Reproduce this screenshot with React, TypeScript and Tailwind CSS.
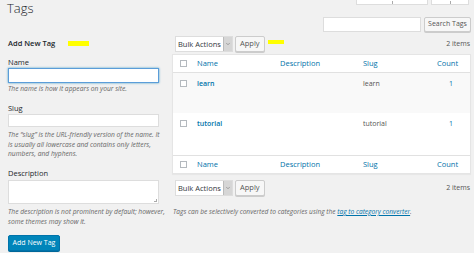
import { ChevronDown } from "lucide-react";

const rows = [
  { name: "learn", slug: "learn", count: "1", bg: "bg-[#f9f9f9]", h: "h-[40px]" },
  { name: "tutorial", slug: "tutorial", count: "1", bg: "bg-white", h: "h-[42px]" },
];

const Checkbox = () => (
  <span className="block w-[7px] h-[7px] border border-[#b4b9be] bg-white" />
);

const BulkBar = ({ className }: { className?: string }) => (
  <div className={`flex items-center pl-[3px] pr-[1px] ${className ?? ""}`}>
    <div className="flex h-[16px] border border-[#ddd] bg-white">
      <span className="px-[2px] text-[7.5px] leading-[14px] text-[#32373c]">Bulk Actions</span>
      <span className="flex w-[9px] items-center justify-center bg-[#d6d6d6] border-l border-[#bbb]">
        <ChevronDown size={6} strokeWidth={2} className="text-[#666]" />
      </span>
    </div>
    <button className="ml-[2px] h-[16px] w-[30px] rounded-[2px] border border-[#ccc] bg-[#f7f7f7] text-[7.5px] text-[#555] shadow-[0_1px_0_#ccc]">
      Apply
    </button>
    <span className="ml-auto text-[7px] text-[#555]">2 items</span>
  </div>
);

const HeaderRow = ({ border }: { border: string }) => (
  <div className={`flex h-[18px] items-center text-[7.5px] text-[#0073aa] ${border} border-[#e1e1e1]`}>
    <span className="w-[20px] pl-[7px]"><Checkbox /></span>
    <span className="w-[83px] pl-[4px]">Name</span>
    <span className="w-[83px] pl-[4px]">Description</span>
    <span className="w-[74px] pl-[4px]">Slug</span>
    <span className="flex-1 pl-[4px]">Count</span>
  </div>
);

export default function App() {
  return (
    <div className="relative h-[253px] w-[474px] overflow-hidden bg-[#f1f1f1] font-['Open_Sans',sans-serif] text-[#23282d]">
      {/* screen options / help tabs, cut off at the top */}
      <div className="absolute right-[5px] top-0 flex gap-[3px]">
        <div className="flex h-[5px] w-[72px] justify-center border border-t-0 border-[#ddd] bg-white">
          <span className="mt-[1px] h-[3px] w-px bg-[#aaa]" />
        </div>
        <div className="flex h-[5px] w-[38px] justify-center border border-t-0 border-[#ddd] bg-white">
          <span className="mt-[1px] h-[3px] w-px bg-[#aaa]" />
        </div>
      </div>

      {/* title + search */}
      <div className="flex items-start justify-between pl-[7px] pr-[3px]">
        <h1 className="text-[13px] font-light leading-[17px] text-[#23282d]">Tags</h1>
        <div className="mt-[17px] flex gap-[3px]">
          <span className="h-[15px] w-[98px] border border-[#ddd] bg-white" />
          <button className="h-[15px] w-[47px] rounded-[2px] border border-[#ccc] bg-[#f7f7f7] text-[7px] text-[#555] shadow-[0_1px_0_#ccc]">
            Search Tags
          </button>
        </div>
      </div>

      <div className="mt-[4px] flex gap-[12px] pl-[8px]">
        {/* left column */}
        <div className="w-[152px] shrink-0 pt-[2px]">
          <h2 className="flex items-center text-[7.5px] font-semibold leading-[10px]">
            Add New Tag
            <span className="ml-[13px] h-[5px] w-[21px] bg-[#ffff00]" />
          </h2>

          <label className="mt-[9px] block text-[7.5px] leading-[10px]">Name</label>
          <div className="mt-[1px] h-[15px] w-[151px] border border-[#5b9dd9] bg-white shadow-[0_0_2px_rgba(30,140,190,0.8)]" />
          <p className="mt-[1px] text-[6.7px] italic leading-[10px] text-[#666]">
            The name is how it appears on your site.
          </p>

          <label className="mt-[9px] block text-[7.5px] leading-[10px]">Slug</label>
          <div className="mt-[1px] h-[13px] w-[151px] border border-[#ddd] bg-white" />
          <p className="mt-[3px] w-[154px] text-[6.7px] italic leading-[9.7px] text-[#666]">
            The “slug” is the URL-friendly version of the name. It is usually all lowercase and contains only letters, numbers, and hyphens.
          </p>

          <label className="mt-[9px] block text-[7.5px] leading-[10px]">Description</label>
          <div className="relative mt-[2px] h-[24px] w-[151px] border border-[#ddd] bg-white">
            <span className="absolute bottom-[1px] right-[1px] h-[3px] w-[3px] border-b border-r border-[#aaa]" />
          </div>
          <p className="mt-[3px] w-[160px] text-[6.7px] italic leading-[10px] text-[#666]">
            The description is not prominent by default; however, some themes may show it.
          </p>

          <button className="mt-[4px] h-[16px] w-[52px] rounded-[2px] border border-[#0073aa] bg-[#0085ba] text-[7px] text-white shadow-[0_1px_0_#006799]">
            Add New Tag
          </button>
        </div>

        {/* right column */}
        <div className="w-[299px]">
          <div className="relative">
            <BulkBar className="" />
            <span className="absolute left-[96px] top-[4px] h-[4px] w-[16px] bg-[#ffff00]" />
          </div>

          <div className="mt-[2px] border border-[#e5e5e5] bg-white shadow-[0_1px_1px_rgba(0,0,0,0.04)]">
            <HeaderRow border="border-b" />
            {rows.map((r) => (
              <div key={r.name} className={`flex items-start pt-[6px] ${r.h} ${r.bg} text-[7px]`}>
                <span className="w-[20px] pl-[7px] pt-[1px]"><Checkbox /></span>
                <span className="w-[83px] pl-[4px] font-semibold text-[#0073aa]">{r.name}</span>
                <span className="w-[83px] pl-[4px]" />
                <span className="w-[74px] pl-[4px] text-[#555]">{r.slug}</span>
                <span className="flex-1 pl-[16px] text-[#0073aa]">{r.count}</span>
              </div>
            ))}
            <HeaderRow border="border-t" />
          </div>

          <BulkBar className="mt-[6px]" />

          <p className="mt-[11px] pl-[1px] text-[6.6px] italic text-[#666]">
            Tags can be selectively converted to categories using the{" "}
            <a className="text-[#0073aa] underline">tag to category converter</a>.
          </p>
        </div>
      </div>
    </div>
  );
}
